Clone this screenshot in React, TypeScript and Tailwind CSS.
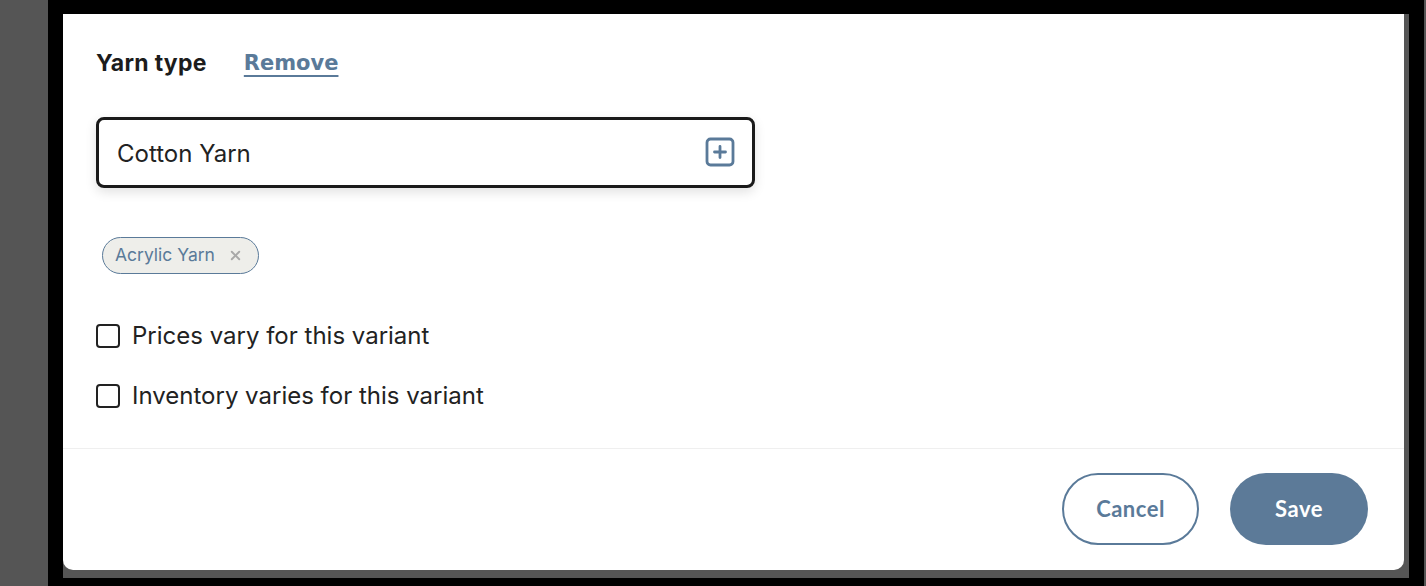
import { X } from "lucide-react";

function PlusSquare() {
  return (
    <svg className="h-[30px] w-[30px]" viewBox="0 0 30 30" fill="none" stroke="#5a7a99" strokeWidth="2.8" strokeLinecap="round">
      <rect x="2" y="2" width="26" height="26" rx="3.5" />
      <path d="M15 9.5v11M9.5 15h11" />
    </svg>
  );
}

function Check({ label }: { label: string }) {
  return (
    <label className="flex h-8 items-center gap-3 cursor-pointer">
      <span className="h-6 w-6 shrink-0 rounded-[4px] border-[2.5px] border-[#222] bg-white" />
      <span className="text-[24px] leading-8 text-[#222]">{label}</span>
    </label>
  );
}

export default function App() {
  return (
    <div className="flex h-[586px] w-full bg-[#555]" style={{ fontFamily: "Inter, 'Liberation Sans', sans-serif" }}>
      <div className="w-[48px] shrink-0" />
      <div className="flex w-[1376px] shrink-0 flex-col bg-black pl-[15px] pt-[14px]">
        <div className="flex h-[564px] w-[1346px] bg-[#555] pr-[5px] pb-[8px]">
          <div className="flex flex-1 flex-col rounded-b-[10px] bg-white">
            {/* Body */}
            <div className="flex h-[435px] flex-col border-b border-[#efefef] px-[33px] pt-[32px]">
              <div className="flex items-center gap-[37px]">
                <h2 className="text-[23px] font-bold tracking-[0.3px] text-[#1c1c1c]">Yarn type</h2>
                <button
                  className="text-[21px] font-bold text-[#5a7a99] underline underline-offset-[5px] decoration-2"
                  style={{ fontFamily: "'DejaVu Sans', sans-serif" }}
                >
                  Remove
                </button>
              </div>

              <div className="mt-[36px] flex h-[71px] w-[659px] items-center justify-between rounded-[8px] border-[3px] border-[#1a1a1a] pl-[18px] pr-[17px] shadow-[0_4px_12px_rgba(0,0,0,0.12)]">
                <span className="pt-[3px] text-[24px] text-[#222]">Cotton Yarn</span>
                <PlusSquare />
              </div>

              <div className="mt-[49px] flex">
                <span className="ml-[6px] flex h-[37px] items-center gap-[13px] rounded-full border border-[#5a7a99] bg-[#eeeeea] pl-[12px] pr-[15px] text-[17.5px] text-[#5a7a99]">
                  Acrylic Yarn
                  <X className="h-[15px] w-[15px] text-[#a8a8a8]" strokeWidth={3} />
                </span>
              </div>

              <div className="mt-[46px] flex flex-col gap-[28px]">
                <Check label="Prices vary for this variant" />
                <Check label="Inventory varies for this variant" />
              </div>
            </div>

            {/* Footer */}
            <div
              className="flex flex-1 items-center justify-end gap-[31px] pr-[36px] pb-[2px]"
              style={{ fontFamily: "Lato, 'Liberation Sans', sans-serif" }}
            >
              <button className="h-[72px] w-[137px] rounded-full border-2 border-[#5a7a99] text-[22px] font-bold tracking-[0.5px] text-[#5a7a99]">
                Cancel
              </button>
              <button className="h-[72px] w-[138px] rounded-full bg-[#5c7a98] text-[22px] font-bold tracking-[0.5px] text-white">
                Save
              </button>
            </div>
          </div>
        </div>
      </div>
      <div className="flex-1" />
    </div>
  );
}
